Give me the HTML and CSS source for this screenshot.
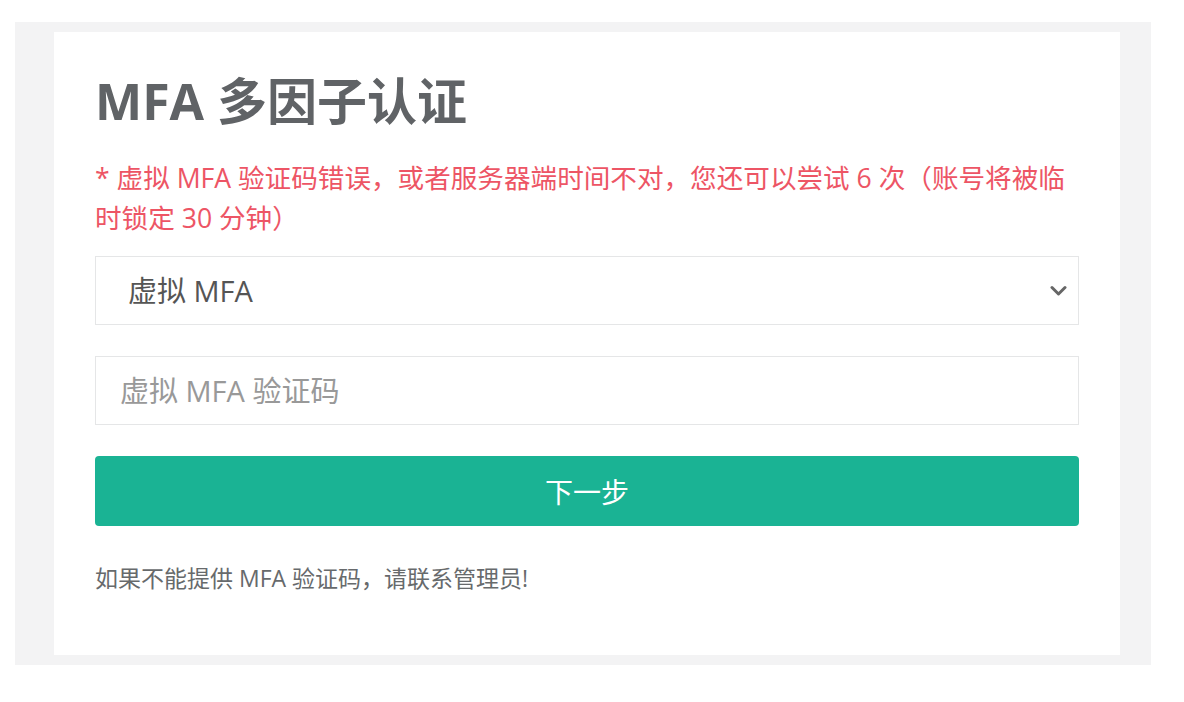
FILE: index.html
```html
<!DOCTYPE html>
<html lang="zh-CN">
<head>
    <meta charset="UTF-8">
    <meta name="viewport" content="width=device-width, initial-scale=1.0">
    <title>MFA 多因子认证</title>
    <link rel="stylesheet" href="styles.css">
</head>
<body>
    <div class="wrap">
        <div class="card">
            <h1 class="title">MFA 多因子认证</h1>
            <p class="error">* 虚拟 MFA 验证码错误，或者服务器端时间不对，您还可以尝试 6 次（账号将被临时锁定 30 分钟）</p>
            <form class="mfa-form" onsubmit="return false">
                <div class="select-box">
                    <select class="field field-select">
                        <option>虚拟 MFA</option>
                    </select>
                    <svg class="chevron" width="17" height="12" viewBox="0 0 17 12">
                        <polyline points="2,2.5 8.5,9 15,2.5" fill="none" stroke="#666" stroke-width="3" stroke-linecap="round" stroke-linejoin="round"/>
                    </svg>
                </div>
                <input type="text" class="field" placeholder="虚拟 MFA 验证码">
                <button type="submit" class="btn-next">下一步</button>
            </form>
            <p class="help">如果不能提供 MFA 验证码，请联系管理员!</p>
        </div>
    </div>
</body>
</html>
```

FILE: styles.css
```css
body {
    margin: 0;
    background: #fff;
    font-family: "Open Sans", "Noto Sans CJK SC", sans-serif;
    color: #676a6c;
}
.wrap {
    margin: 22px 33px 0 15px;
    padding: 10px 31px 10px 39px;
    background: #f3f3f4;
}
.card {
    background: #fff;
    padding: 39px 41px 62px 41px;
}
.title {
    margin: 0;
    font-size: 50px;
    line-height: 60px;
    font-weight: 700;
    color: #606366;
}
.error {
    margin: 27px 0 0;
    font-size: 26.6px;
    line-height: 40px;
    color: #ed5565;
}
.mfa-form {
    margin-top: 18px;
    display: flex;
    flex-direction: column;
    gap: 31px;
}
.select-box {
    position: relative;
}
.field {
    box-sizing: border-box;
    width: 100%;
    height: 69px;
    margin: 0;
    padding: 0 24px;
    border: 1px solid #e5e6e7;
    border-radius: 0;
    background: #fff;
    font-family: inherit;
    font-size: 29px;
    color: #555;
    outline: none;
}
.field::placeholder {
    color: #999;
}
.field-select {
    appearance: none;
    -webkit-appearance: none;
    padding-left: 32px;
}
.chevron {
    position: absolute;
    right: 12px;
    top: 29px;
    pointer-events: none;
}
.btn-next {
    height: 70px;
    border: none;
    border-radius: 4px;
    background: #1ab394;
    color: #fff;
    font-family: inherit;
    font-size: 28px;
    cursor: pointer;
}
.help {
    margin: 37px 0 0;
    font-size: 23px;
    line-height: 30px;
    color: #676a6c;
}
```
